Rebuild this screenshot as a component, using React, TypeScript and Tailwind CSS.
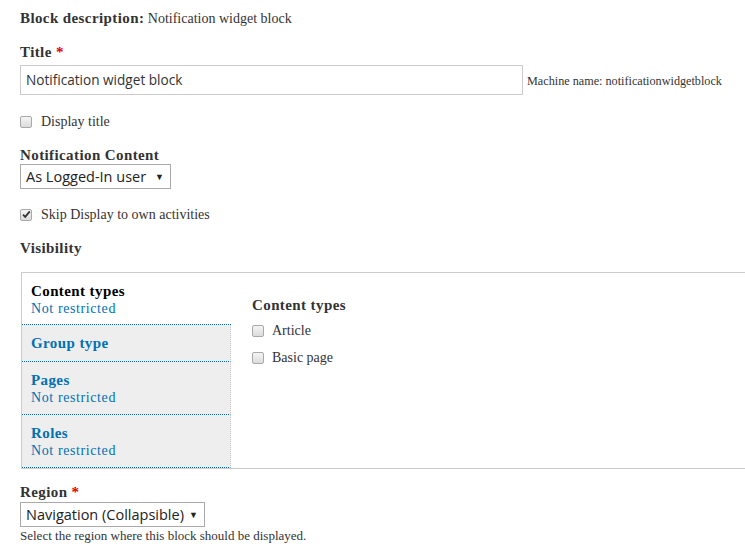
import React from "react";

const serif = "font-['Liberation_Serif',serif]";
const sans = "font-['Open_Sans',sans-serif]";
const bold = "font-bold text-[15px] tracking-[0.4px]";

function Checkbox({ checked = false }: { checked?: boolean }) {
  return (
    <span className="relative inline-block h-[12px] w-[12px] shrink-0 rounded-[2px] border border-[#a9a9a9] bg-gradient-to-b from-[#f4f4f4] to-[#dcdcdc]">
      {checked && (
        <svg viewBox="0 0 12 12" className="absolute left-[0px] top-[-1px] h-[11px] w-[11px]">
          <path d="M2.2 6.2 L4.6 8.6 L9.6 2.6" fill="none" stroke="#333" strokeWidth="2" />
        </svg>
      )}
    </span>
  );
}

function Tab({ title, summary, active = false }: { title: string; summary?: string; active?: boolean }) {
  return (
    <div
      className={`border-b border-dotted border-b-[#0071b3] pl-[9px] pr-[10px] pt-[8px] ${
        active ? "bg-white border-r-0 pb-[7px]" : "bg-[#eeeeee] border-r border-r-[#cccccc] pb-[8px]"
      }`}
    >
      <div className={`${bold} leading-[20px] ${active ? "text-black" : "text-[#0071b3]"}`}>{title}</div>
      {summary && <div className="text-[14px] tracking-[0.6px] leading-[16px] text-[#0071b3]">{summary}</div>}
    </div>
  );
}

export default function App() {
  return (
    <div className={`h-[549px] w-[745px] overflow-hidden bg-white pl-[20px] ${serif} text-[14px] text-[#333333]`}>
      <div className="pt-[9px] leading-[18px]">
        <span className={bold}>Block description:</span> Notification widget block
      </div>

      <div className={`mt-[15px] ${bold} leading-[18px]`}>
        Title <span className="text-[#e00000]">*</span>
      </div>
      <div className="mt-[4px] flex items-center">
        <div className={`flex h-[30px] w-[503px] items-center border border-[#cccccc] px-[5px] ${sans} text-[13.6px] text-[#333]`}>
          Notification widget block
        </div>
        <span className="ml-[4px] mt-[2px] text-[12.2px] leading-[14px]">Machine name: notificationwidgetblock</span>
      </div>

      <div className="mt-[17px] flex items-center gap-[9px] leading-[18px]">
        <Checkbox />
        <span className="mt-[1px]">Display title</span>
      </div>

      <div className={`mt-[15px] ${bold} leading-[18px]`}>Notification Content</div>
      <div className="mt-[0px]">
        <div className={`flex h-[25px] w-[151px] items-center justify-between border border-[#aaaaaa] pl-[5px] pr-[6px] ${sans} text-[14.5px] text-[#222]`}>
          <span>As Logged-In user</span>
          <span className="text-[9px]">▼</span>
        </div>
      </div>

      <div className="mt-[16px] flex items-center gap-[9px] leading-[18px]">
        <Checkbox checked />
        <span className="mt-[1px]">Skip Display to own activities</span>
      </div>

      <div className={`mt-[15px] ${bold} leading-[18px]`}>Visibility</div>

      <div className="mt-[15px] mr-[-20px] ml-[1px] flex border-y border-[#cccccc]">
        <div className="w-[210px] shrink-0 border-l border-[#cccccc]">
          <Tab title="Content types" summary="Not restricted" active />
          <Tab title="Group type" />
          <Tab title="Pages" summary="Not restricted" />
          <Tab title="Roles" summary="Not restricted" />
        </div>
        <div className="flex-1 pl-[21px] pt-[22px]">
          <div className={`${bold} leading-[20px]`}>Content types</div>
          <div className="mt-[6px] flex items-center gap-[8px] leading-[18px]">
            <Checkbox />
            <span className="mt-[1px]">Article</span>
          </div>
          <div className="mt-[8px] flex items-center gap-[8px] leading-[18px]">
            <Checkbox />
            <span className="mt-[1px]">Basic page</span>
          </div>
        </div>
      </div>

      <div className={`mt-[14px] ${bold} leading-[18px]`}>
        Region <span className="text-[#e00000]">*</span>
      </div>
      <div className="mt-[1px]">
        <div className={`flex h-[25px] w-[185px] items-center justify-between border border-[#aaaaaa] pl-[5px] pr-[6px] ${sans} text-[14.5px] text-[#222]`}>
          <span>Navigation (Collapsible)</span>
          <span className="text-[9px]">▼</span>
        </div>
      </div>
      <div className="mt-[1px] text-[13px] leading-[16px]">Select the region where this block should be displayed.</div>
    </div>
  );
}
